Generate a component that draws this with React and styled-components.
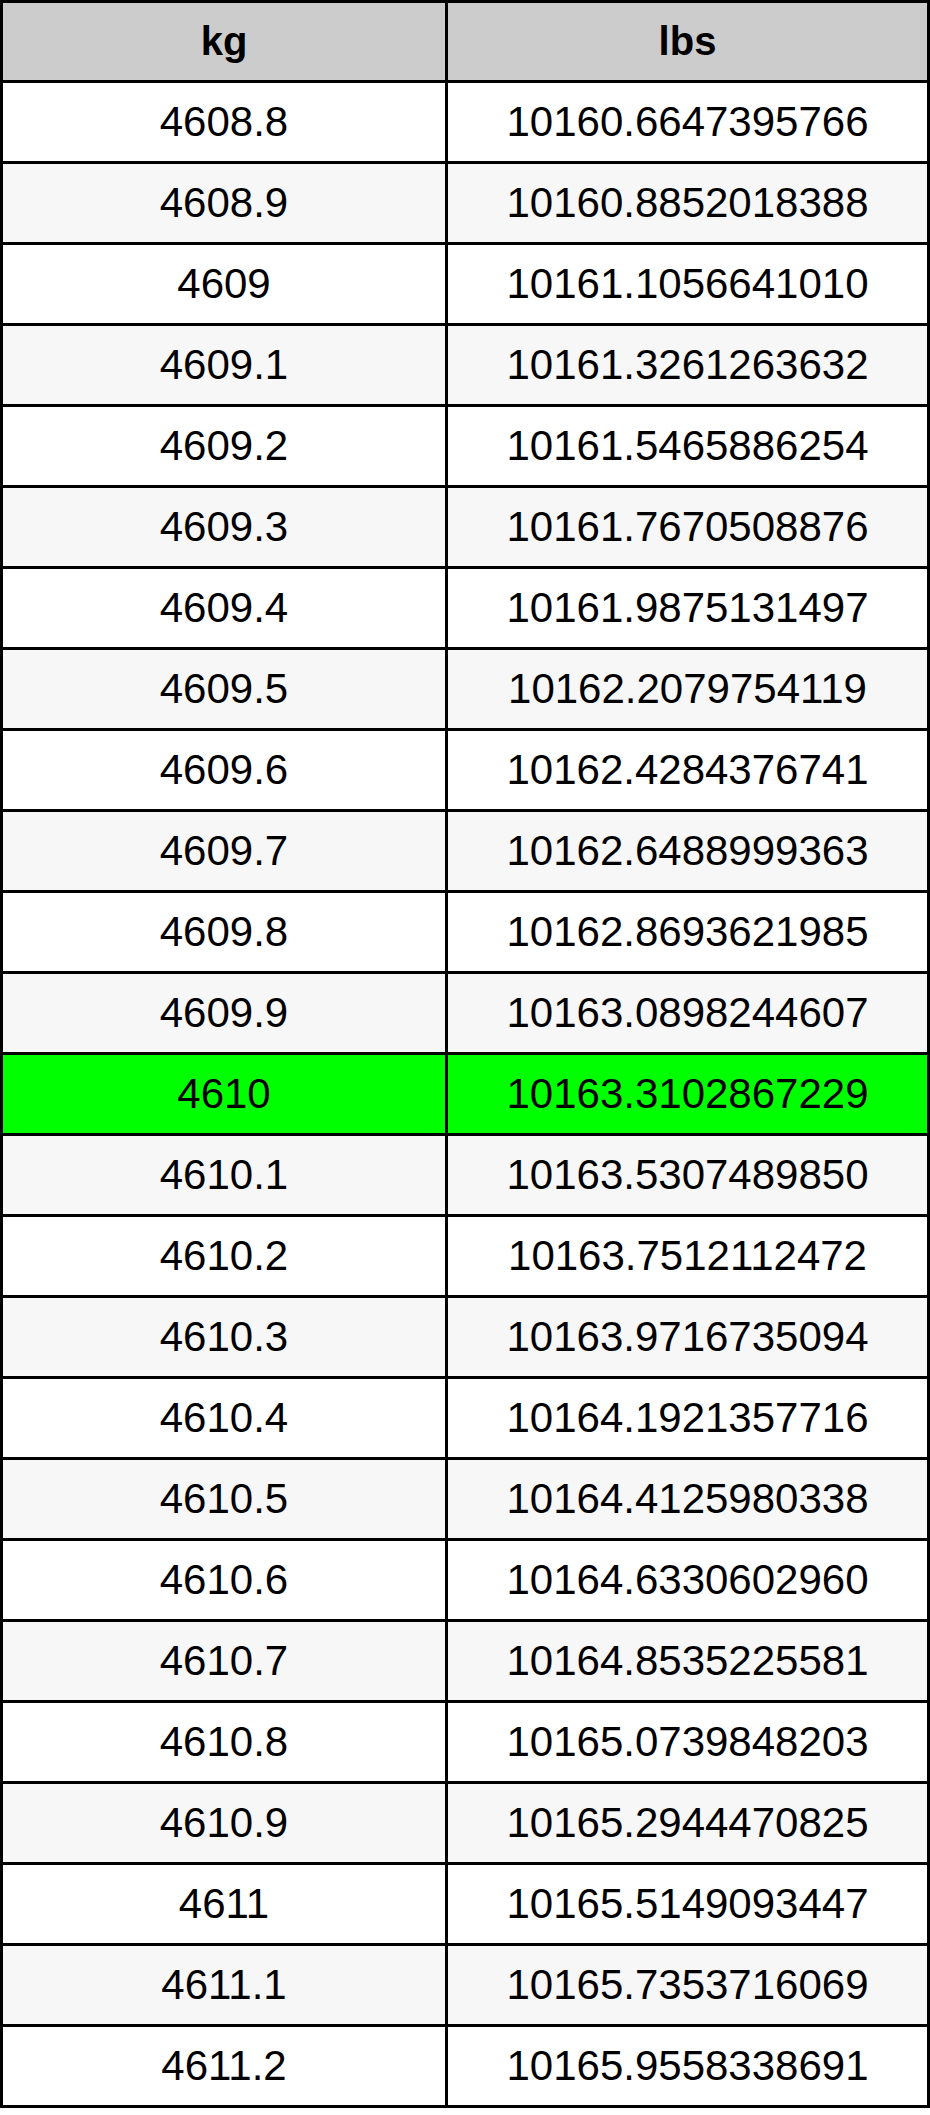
import React from "react";
import styled, { createGlobalStyle } from "styled-components";

const GlobalStyle = createGlobalStyle`
  html, body {
    margin: 0;
    padding: 0;
    background: #ffffff;
  }
  body {
    font-family: "Liberation Sans", Arial, sans-serif;
  }
`;

const Table = styled.div`
  width: 930px;
  box-sizing: border-box;
  border: 3px solid #000;
  background: #000;
  display: flex;
  flex-direction: column;
  gap: 3px;
`;

const Row = styled.div`
  display: grid;
  grid-template-columns: 442px 479px;
  column-gap: 3px;
  height: ${(p) => (p.$head ? "77px" : "78px")};
`;

const Cell = styled.div`
  display: flex;
  align-items: center;
  justify-content: center;
  background: ${(p) => p.$bg};
  color: #000;
  font-size: ${(p) => (p.$head ? "40px" : "42px")};
  font-weight: ${(p) => (p.$head ? 700 : 400)};
`;

const rows = [
  ["4608.8", "10160.6647395766"],
  ["4608.9", "10160.8852018388"],
  ["4609", "10161.1056641010"],
  ["4609.1", "10161.3261263632"],
  ["4609.2", "10161.5465886254"],
  ["4609.3", "10161.7670508876"],
  ["4609.4", "10161.9875131497"],
  ["4609.5", "10162.2079754119"],
  ["4609.6", "10162.4284376741"],
  ["4609.7", "10162.6488999363"],
  ["4609.8", "10162.8693621985"],
  ["4609.9", "10163.0898244607"],
  ["4610", "10163.3102867229"],
  ["4610.1", "10163.5307489850"],
  ["4610.2", "10163.7512112472"],
  ["4610.3", "10163.9716735094"],
  ["4610.4", "10164.1921357716"],
  ["4610.5", "10164.4125980338"],
  ["4610.6", "10164.6330602960"],
  ["4610.7", "10164.8535225581"],
  ["4610.8", "10165.0739848203"],
  ["4610.9", "10165.2944470825"],
  ["4611", "10165.5149093447"],
  ["4611.1", "10165.7353716069"],
  ["4611.2", "10165.9558338691"],
];

const rowColor = (kg, i) => {
  if (kg === "4610") return "#00ff00";
  return i % 2 === 0 ? "#ffffff" : "#f7f7f7";
};

const App = () => {
  return (
    <>
      <GlobalStyle />
      <Table>
        <Row $head>
          <Cell $head $bg="#cccccc">kg</Cell>
          <Cell $head $bg="#cccccc">lbs</Cell>
        </Row>
        {rows.map(([kg, lbs], i) => (
          <Row key={kg}>
            <Cell $bg={rowColor(kg, i)}>{kg}</Cell>
            <Cell $bg={rowColor(kg, i)}>{lbs}</Cell>
          </Row>
        ))}
      </Table>
    </>
  );
};

export default App;
